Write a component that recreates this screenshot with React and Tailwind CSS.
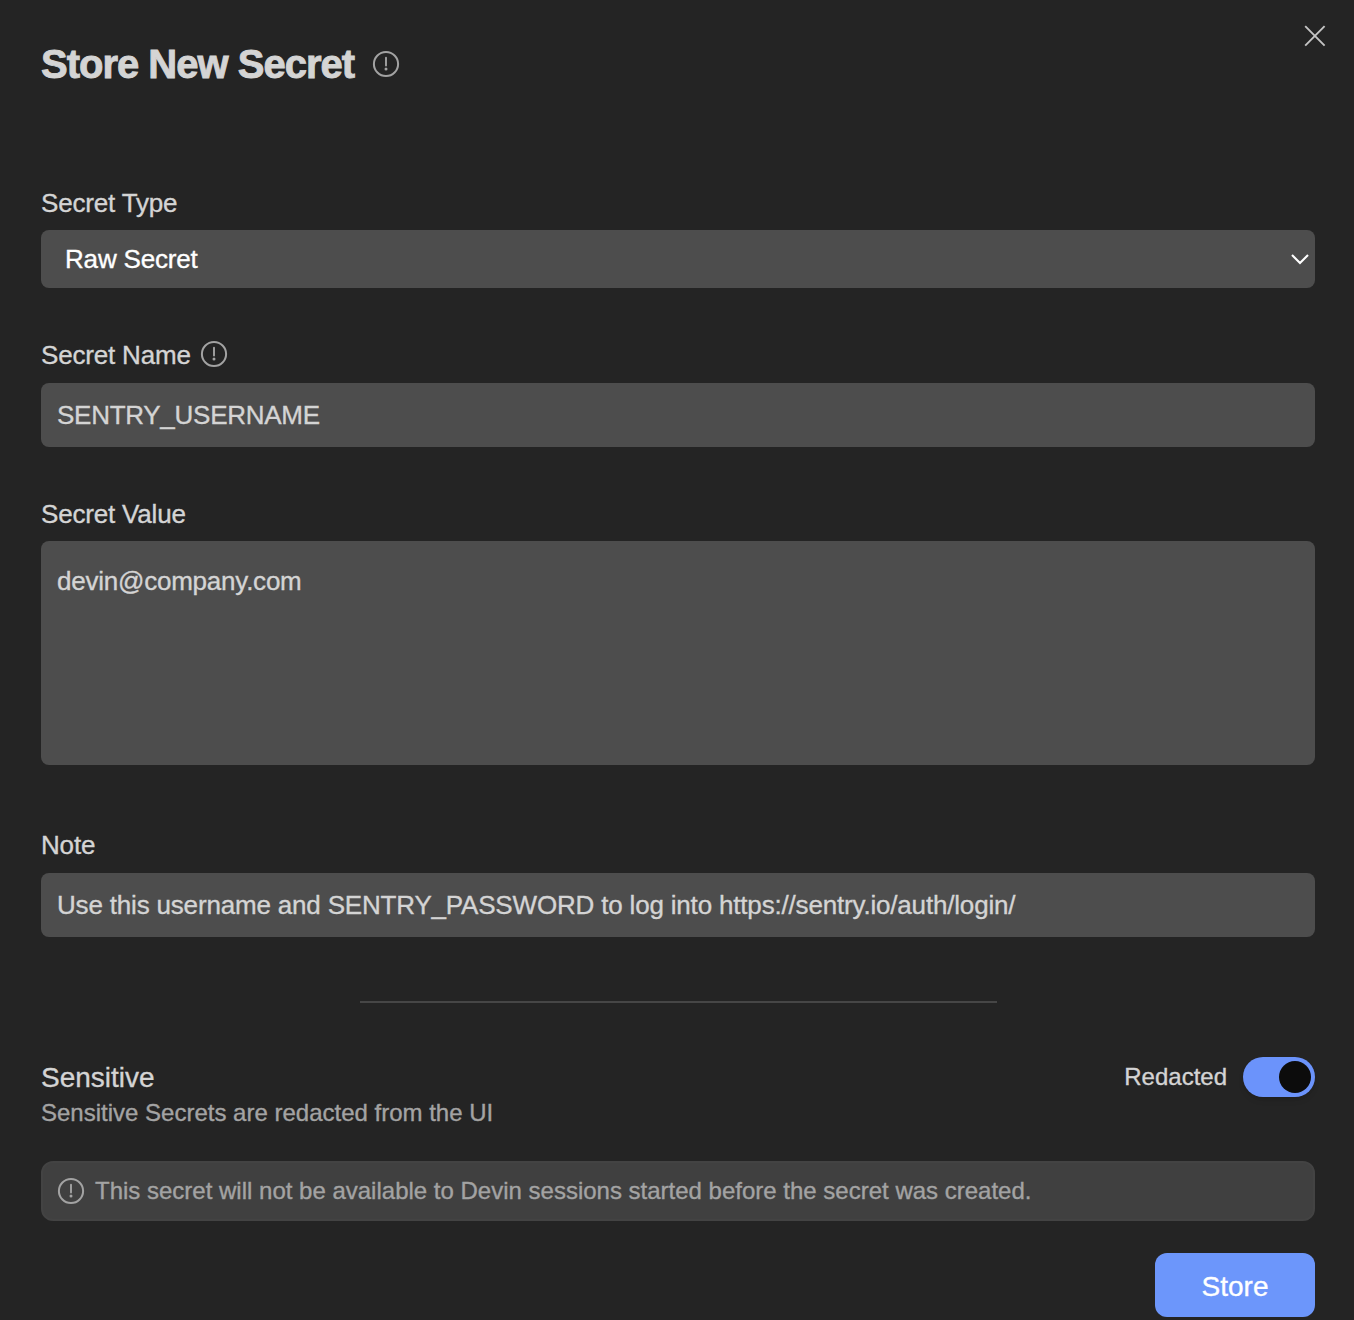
import React from "react";

function Info({ className = "" }) {
  return (
    <svg className={"shrink-0 " + className} width="28" height="28" viewBox="0 0 28 28" fill="none" stroke="currentColor" strokeWidth="2">
      <circle cx="14" cy="14" r="12.1" />
      <path d="M14 7.7v7.8" strokeLinecap="round" strokeWidth="1.9" />
      <circle cx="14" cy="19.1" r="1.5" fill="currentColor" stroke="none" />
    </svg>
  );
}

export default function App() {
  return (
    <div className="w-[1354px] h-[1320px] overflow-hidden bg-[#242424] pl-[41px] pr-[39px] text-[#d4d4d4] font-['Liberation_Sans',Arial,sans-serif] text-[26px] leading-[32px] tracking-[-0.18px] [-webkit-text-stroke:0.35px_currentColor]">
      <header className="flex h-[187px] items-start justify-between">
        <div className="flex items-center gap-[17px] pt-[40px]">
          <h1 className="w-[314px] whitespace-nowrap text-[40px] leading-[48px] font-bold tracking-[-1px] [-webkit-text-stroke:0.9px_currentColor]">Store New Secret</h1>
          <Info className="text-[#a3a3a3]" />
        </div>
        <button aria-label="Close" className="mt-[25px] -mr-[11px] text-[#c4c4c4]">
          <svg width="22" height="22" viewBox="0 0 22 22" stroke="currentColor" strokeWidth="1.9"><path d="M1.2 1.2l19.4 19.4M20.6 1.2l-19.4 19.4" /></svg>
        </button>
      </header>
      <label className="block h-[43px]">Secret Type</label>
      <div className="flex h-[58px] items-center justify-between rounded-lg bg-[#4d4d4d] pl-6 pr-[6px] text-white">
        <span>Raw Secret</span>
        <svg width="18" height="12" viewBox="0 0 18 12" fill="none" stroke="currentColor" strokeWidth="2.1"><path d="M1 2l8 8 8-8" /></svg>
      </div>
      <label className="mt-[50px] flex h-[45px] items-start"><span className="w-[159px] whitespace-nowrap pt-px">Secret Name</span><Info className="mt-[2px] text-[#a3a3a3]" /></label>
      <div className="flex h-[64px] items-center rounded-lg bg-[#4d4d4d] px-4 tracking-[-0.27px]">SENTRY_USERNAME</div>
      <label className="mt-[51px] block h-[43px]">Secret Value</label>
      <div className="h-[224px] rounded-lg bg-[#4d4d4d] px-4 pt-6 tracking-[-0.23px]">devin@company.com</div>
      <label className="mt-[64px] block h-[44px]">Note</label>
      <div className="flex h-[64px] items-center rounded-lg bg-[#4d4d4d] px-4">Use this username and SENTRY_PASSWORD to log into https://sentry.io/auth/login/</div>
      <div className="mx-auto mt-[64px] h-[2px] w-[637px] bg-[#464646]" />
      <div className="mt-[54px] flex h-[104px] justify-between tracking-normal">
        <div>
          <div className="mt-[3px] text-[28px] leading-[36px]">Sensitive</div>
          <div className="text-[24px] leading-[34px] text-[#a3a3a3]">Sensitive Secrets are redacted from the UI</div>
        </div>
        <div className="flex h-[40px] items-center gap-4 text-[24px]">
          <span>Redacted</span>
          <div className="flex h-[40px] w-[72px] items-center justify-end rounded-full bg-[#6b93fb] pr-1 shadow-md"><div className="size-8 rounded-full bg-[#0c0c0c]" /></div>
        </div>
      </div>
      <div className="flex h-[60px] items-center gap-[10px] rounded-xl border-2 border-[#434343] bg-[#404040] px-[14px] text-[24px] tracking-normal text-[#a3a3a3]"><Info />This secret will not be available to Devin sessions started before the secret was created.</div>
      <button className="mt-[32px] ml-auto block h-[64px] w-[160px] rounded-xl bg-[#6c96fb] pt-[3px] text-[28px] tracking-normal text-white">Store</button>
    </div>
  );
}
